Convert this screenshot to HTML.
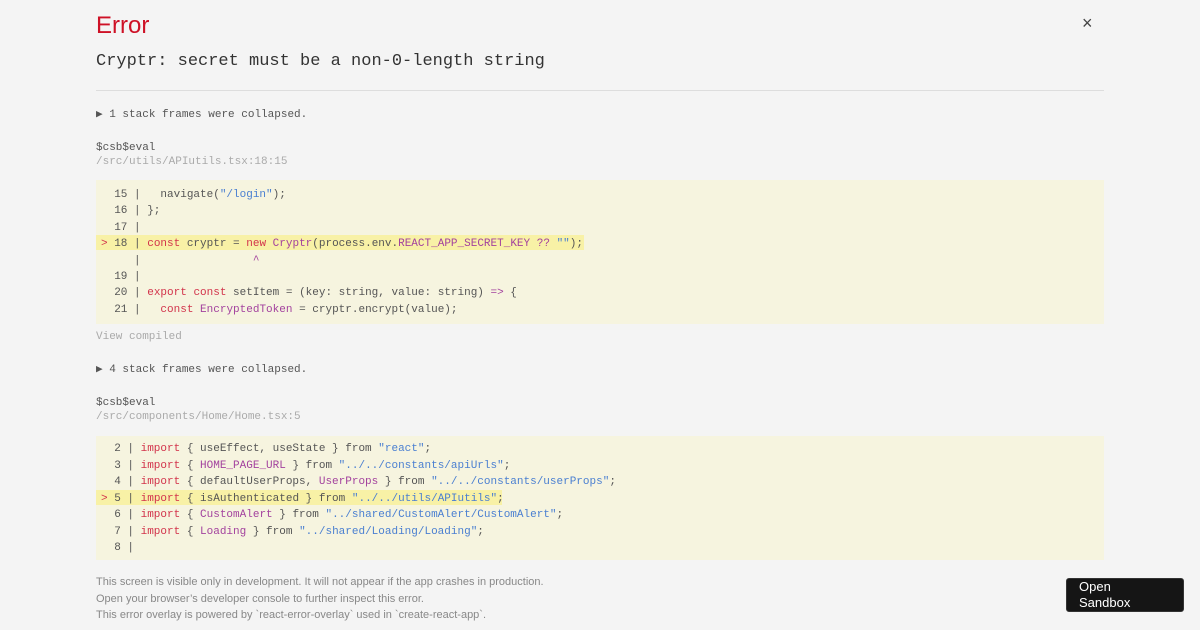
<!DOCTYPE html>
<html><head><style>
*{margin:0;padding:0;box-sizing:border-box}
body{width:1200px;height:630px;background:#f4f4f4;position:relative;overflow:hidden;font-family:"Liberation Mono",monospace;}
.a{position:absolute;white-space:pre;}
.m{font-family:"Liberation Mono",monospace;font-size:11px;line-height:14px;}
.g{color:#555}
.lg{color:#aaa}
.code{position:absolute;left:96px;width:1008px;background:#f6f4df;}
.hl{position:absolute;background:#f8f1a6;height:15px;}
.k{color:#d2334b}.p{color:#a3429e}.s{color:#4a7fd1}.c{color:#555}
.f{font-family:"Liberation Sans",sans-serif;font-size:11px;color:#888;}
</style></head><body>
<div class="a" style="left:96px;top:11px;font-family:'Liberation Sans',sans-serif;font-size:24px;color:#ce1126;line-height:30px">Error</div>
<div class="a" style="left:1082px;top:12px;font-family:'Liberation Sans',sans-serif;font-size:18px;color:#444;line-height:22px">×</div>
<div class="a" style="left:96px;top:51px;font-size:17px;color:#333;line-height:22px">Cryptr: secret must be a non-0-length string</div>
<div class="a" style="left:96px;top:90px;width:1008px;height:1px;background:#ddd"></div>
<div class="a m g" style="left:96px;top:108px">▶ 1 stack frames were collapsed.</div>
<div class="a m g" style="left:96px;top:141px">$csb$eval</div>
<div class="a m lg" style="left:96px;top:155px">/src/utils/APIutils.tsx:18:15</div>
<div class="code" style="top:180px;height:144px"></div>
<div class="hl" style="left:96px;top:235px;width:488px"></div>
<div class="a m c" style="left:101px;top:187px;line-height:16.4px">  15 |   navigate(<span class="s">"/login"</span>);
  16 | };
  17 |
<span class="k">&gt;</span> 18 | <span class="k">const</span> cryptr = <span class="k">new</span> <span class="p">Cryptr</span>(process.env.<span class="p">REACT_APP_SECRET_KEY</span> <span class="p">??</span> <span class="s">""</span>);
     |                 <span class="p">^</span>
  19 |
  20 | <span class="k">export</span> <span class="k">const</span> setItem = (key: string, value: string) <span class="p">=&gt;</span> {
  21 |   <span class="k">const</span> <span class="p">EncryptedToken</span> = cryptr.encrypt(value);</div>
<div class="a m lg" style="left:96px;top:330px">View compiled</div>
<div class="a m g" style="left:96px;top:363px">▶ 4 stack frames were collapsed.</div>
<div class="a m g" style="left:96px;top:396px">$csb$eval</div>
<div class="a m lg" style="left:96px;top:410px">/src/components/Home/Home.tsx:5</div>
<div class="code" style="top:436px;height:124px"></div>
<div class="hl" style="left:96px;top:490px;width:406px"></div>
<div class="a m c" style="left:101px;top:441px;line-height:16.5px">  2 | <span class="k">import</span> { useEffect, useState } from <span class="s">"react"</span>;
  3 | <span class="k">import</span> { <span class="p">HOME_PAGE_URL</span> } from <span class="s">"../../constants/apiUrls"</span>;
  4 | <span class="k">import</span> { defaultUserProps, <span class="p">UserProps</span> } from <span class="s">"../../constants/userProps"</span>;
<span class="k">&gt;</span> 5 | <span class="k">import</span> { isAuthenticated } from <span class="s">"../../utils/APIutils"</span>;
  6 | <span class="k">import</span> { <span class="p">CustomAlert</span> } from <span class="s">"../shared/CustomAlert/CustomAlert"</span>;
  7 | <span class="k">import</span> { <span class="p">Loading</span> } from <span class="s">"../shared/Loading/Loading"</span>;
  8 |</div>
<div class="a f" style="left:96px;top:574px;line-height:16.5px">This screen is visible only in development. It will not appear if the app crashes in production.
Open your browser’s developer console to further inspect this error.
This error overlay is powered by `react-error-overlay` used in `create-react-app`.</div>
<div class="a" style="left:1066px;top:578px;width:118px;height:34px;background:#151515;border-radius:3px;border:1px solid #333"></div>
<div class="a" style="left:1079px;top:579px;font-family:'Liberation Sans',sans-serif;font-size:13px;line-height:16px;color:#fff">Open
Sandbox</div>
</body></html>
